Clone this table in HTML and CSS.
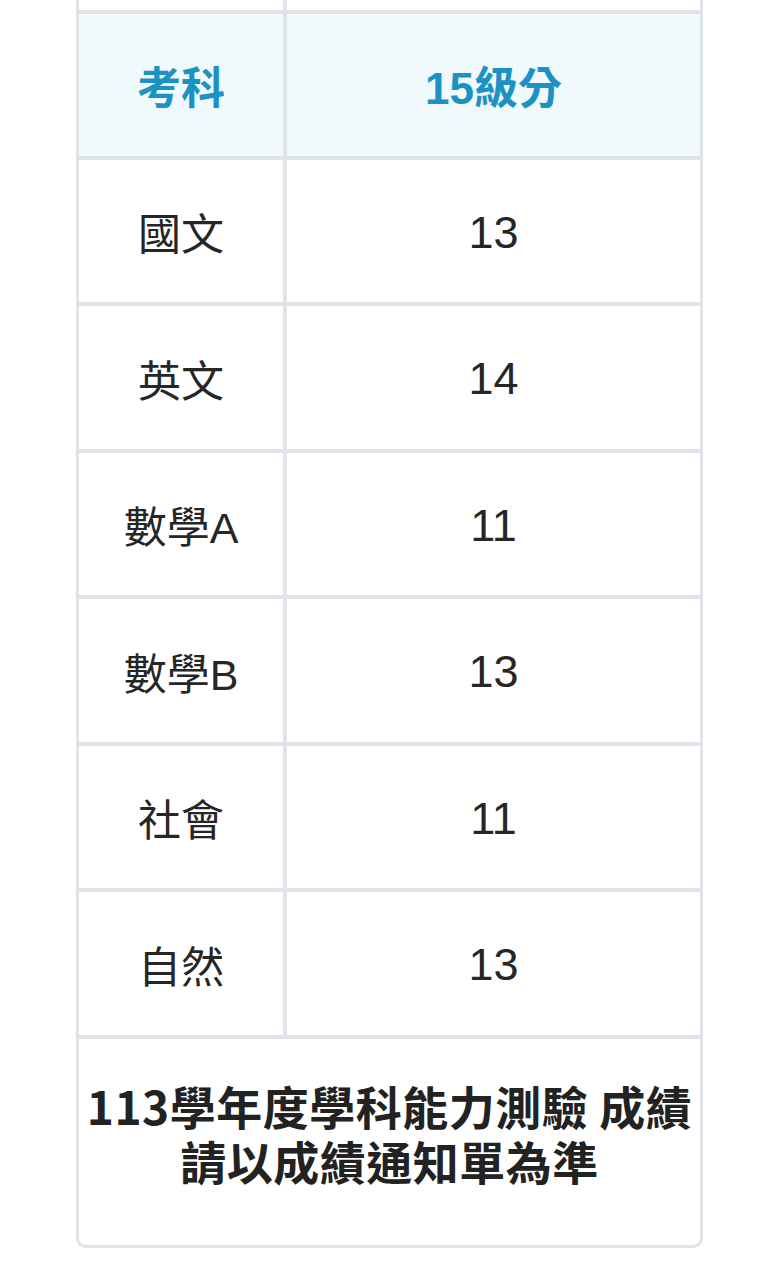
FILE: index.html
```html
<!DOCTYPE html>
<html lang="zh-Hant">
<head>
<meta charset="utf-8">
<title>113學年度學科能力測驗 成績</title>
<link rel="stylesheet" href="styles.css">
</head>
<body>
<div class="card">
  <div class="grid">
    <div class="cell"></div>
    <div class="cell"></div>
    <div class="cell head">考科</div>
    <div class="cell head">15級分</div>
    <div class="cell">國文</div>
    <div class="cell num">13</div>
    <div class="cell">英文</div>
    <div class="cell num">14</div>
    <div class="cell">數學A</div>
    <div class="cell num">11</div>
    <div class="cell">數學B</div>
    <div class="cell num">13</div>
    <div class="cell">社會</div>
    <div class="cell num">11</div>
    <div class="cell">自然</div>
    <div class="cell num">13</div>
  </div>
  <div class="note">
    <div class="note-line">113學年度學科能力測驗 成績</div>
    <div class="note-line">請以成績通知單為準</div>
  </div>
</div>
</body>
</html>
```
FILE: styles.css
```css
html, body {
  margin: 0;
  padding: 0;
  background: #ffffff;
}
body {
  font-family: "Liberation Sans", "Noto Sans CJK TC", sans-serif;
  color: #222222;
}
.card {
  margin-left: 76px;
  width: 627px;
}
.grid {
  display: grid;
  grid-template-columns: 204px 413px;
  grid-template-rows: 10px 142px 142px 143px 142px 143px 142px 143px;
  column-gap: 4px;
  row-gap: 4px;
  padding: 0 3px 4px 3px;
  background: #e1e3e8;
}
.cell {
  background: #ffffff;
  display: flex;
  align-items: center;
  justify-content: center;
  font-size: 43px;
  font-weight: 400;
  color: #262626;
}
.cell.head {
  background: #f0f9fc;
  color: #1c92c4;
  font-weight: 700;
  font-size: 44px;
}
.cell.num {
  font-size: 45px;
  padding-top: 3px;
}
.note {
  height: 167px;
  padding-top: 39px;
  border: 3px solid #e1e3e8;
  border-top: none;
  border-radius: 0 0 10px 10px;
  text-align: center;
  font-family: "Noto Sans CJK TC", sans-serif;
  font-weight: 700;
  font-size: 46px;
  color: #222222;
  white-space: nowrap;
  letter-spacing: 0.5px;
}
.note-line {
  height: 55px;
  line-height: 55px;
}
```
